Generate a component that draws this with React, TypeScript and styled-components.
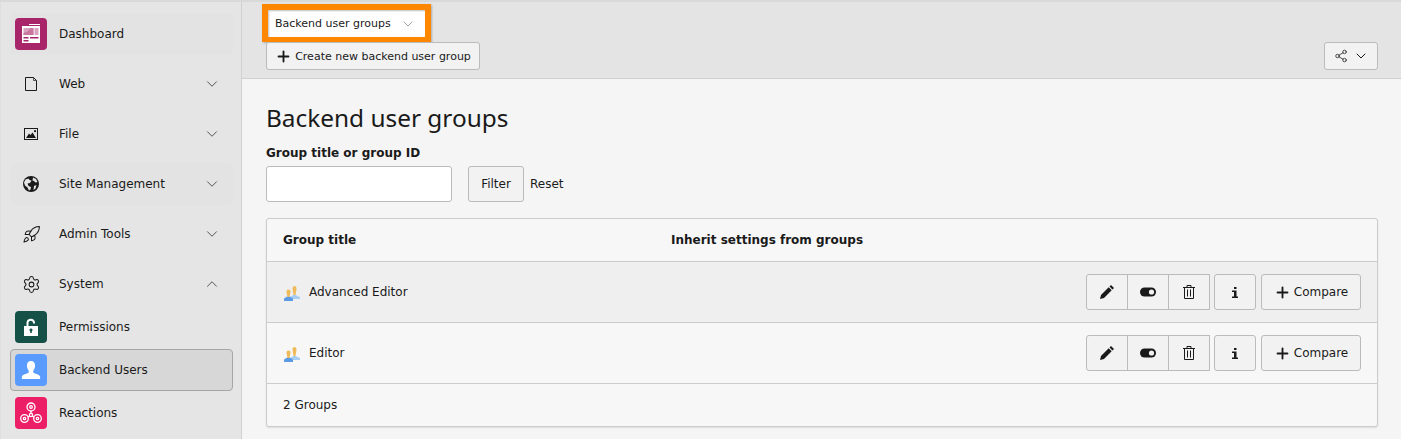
import React from 'react';
import styled, { createGlobalStyle } from 'styled-components';
import { Share2, ChevronDown, ChevronUp, Plus, Settings, Rocket } from 'lucide-react';

const GlobalStyle = createGlobalStyle`
  html, body {
    margin: 0;
    height: 100%;
    overflow: hidden;
    background: #f5f5f5;
    color: #1a1a1a;
    font-family: "DejaVu Sans", Verdana, sans-serif;
    font-size: 12px;
  }
`;

const Page = styled.div`
  display: flex;
  width: 1401px;
  height: 439px;
  overflow: hidden;
  border-top: 2px solid #d9d9d9;
  box-sizing: border-box;
`;

const Sidebar = styled.nav`
  box-sizing: border-box;
  flex: 0 0 242px;
  padding: 11px 8px 0 10px;
  background: #e5e5e5;
  border-left: 1px solid #dcdfe2;
  border-right: 1px solid #d0d0d0;
`;

const NavRow = styled.div<{ $hover?: boolean }>`
  display: flex;
  align-items: center;
  box-sizing: border-box;
  height: 42px;
  margin: 8px 0 0 -1px;
  padding: 0 12px 0 5px;
  border-radius: 4px;
  background: ${props => (props.$hover ? '#e3e3e3' : 'transparent')};

  &:first-child {
    margin-top: 0;
  }
`;

const NavIconSlot = styled.span`
  display: flex;
  align-items: center;
  justify-content: center;
  width: 32px;
  height: 32px;
  margin-right: 12px;
  color: #1a1a1a;
`;

const NavLabel = styled.span`
  flex: 1;
  font-size: 12px;
  color: #1a1a1a;
`;

const SubRow = styled.div<{ $active?: boolean }>`
  display: flex;
  align-items: center;
  box-sizing: border-box;
  height: 42px;
  margin: 1px 0 0 -1px;
  padding: 0 4px;
  border-radius: 4px;
  border: 1px solid ${props => (props.$active ? '#a6a6a6' : 'transparent')};
  background: ${props => (props.$active ? '#d7d7d7' : 'transparent')};
`;

const ModuleIcon = styled.span<{ $color: string }>`
  display: flex;
  align-items: center;
  justify-content: center;
  width: 32px;
  height: 32px;
  margin-right: 12px;
  border-radius: 4px;
  background: ${props => props.$color};
`;

const Main = styled.main`
  flex: 1;
  min-width: 0;
  display: flex;
  flex-direction: column;
`;

const DocHeader = styled.header`
  box-sizing: border-box;
  height: 77px;
  padding: 2px 23px 0 24px;
  background: #e4e4e4;
  border-bottom: 1px solid #d0d0d0;
`;

const MenuSelect = styled.div`
  display: flex;
  align-items: center;
  justify-content: space-between;
  box-sizing: border-box;
  width: 169px;
  height: 38px;
  margin-left: -4px;
  padding: 0 9px 0 7px;
  background: #fff;
  font-size: 11px;
  border: 6px solid #ff8700;
  border-bottom-width: 5px;
  box-shadow: inset 1px 1px 2px rgba(0, 0, 0, 0.25), 1px 1px 2px rgba(0, 0, 0, 0.25);
`;

const DocButtons = styled.div`
  display: flex;
  justify-content: space-between;
`;

const Button = styled.button`
  display: inline-flex;
  align-items: center;
  justify-content: center;
  box-sizing: border-box;
  padding: 0;
  background: #f2f2f2;
  border: 1px solid #bbb;
  border-radius: 3px;
  color: #1a1a1a;
  font-family: inherit;
  font-size: 11px;
`;

const CreateButton = styled(Button)`
  width: 214px;
  height: 28px;
  gap: 3px;
`;

const ShareButton = styled(Button)`
  width: 54px;
  height: 28px;
  gap: 5px;
`;

const Content = styled.section`
  flex: 1;
  padding: 21px 23px 0 24px;
  background: #f5f5f5;
`;

const Title = styled.h1`
  margin: 0 0 10px;
  font-family: "Noto Sans", sans-serif;
  font-size: 24.4px;
  font-weight: 400;
  line-height: 36px;
  color: #1a1a1a;
`;

const FieldLabel = styled.label`
  display: block;
  margin-bottom: 6px;
  font-size: 12px;
  font-weight: 700;
  line-height: 14px;
`;

const FilterRow = styled.div`
  display: flex;
  align-items: center;
  margin-bottom: 16px;
`;

const TextInput = styled.input`
  box-sizing: border-box;
  width: 186px;
  height: 36px;
  margin-right: 16px;
  background: #fff;
  border: 1px solid #bbb;
  border-radius: 3px;
`;

const FilterButton = styled(Button)`
  width: 56px;
  height: 36px;
  font-size: 12px;
`;

const ResetLink = styled.span`
  margin-left: 6px;
  font-size: 12px;
`;

const Panel = styled.div`
  box-sizing: border-box;
  width: 1112px;
  background: #f7f7f7;
  border: 1px solid #ccc;
  border-radius: 3px;
  box-shadow: 0 1px 2px rgba(0, 0, 0, 0.1);
`;

const HeadRow = styled.div`
  display: flex;
  align-items: center;
  height: 42px;
  padding: 0 16px;
  font-weight: 700;
  border-bottom: 1px solid #ccc;
`;

const TitleCell = styled.span`
  width: 388px;
`;

const GroupRow = styled.div<{ $hover?: boolean }>`
  display: flex;
  align-items: center;
  height: 60px;
  padding: 0 16px;
  background: ${props => (props.$hover ? '#efefef' : 'transparent')};
  border-bottom: 1px solid #ccc;
`;

const GroupIconSlot = styled.span`
  display: flex;
  margin-left: 1px;
  margin-top: 1px;
`;

const GroupName = styled.span`
  flex: 1;
  margin-left: 9px;
`;

const ButtonGroup = styled.div`
  display: flex;
  margin-right: 4px;
`;

const GroupButton = styled(Button)`
  width: 42px;
  height: 36px;
  border-radius: 0;
  margin-left: -1px;

  &:first-child {
    margin-left: 0;
    border-radius: 3px 0 0 3px;
  }
`;

const InfoButton = styled(Button)`
  width: 42px;
  height: 36px;
  margin-right: 5px;
`;

const CompareButton = styled(Button)`
  width: 100px;
  height: 36px;
  gap: 3px;
  font-size: 12px;
`;

const FootRow = styled.div`
  display: flex;
  align-items: center;
  height: 42px;
  padding: 0 16px;
`;

const FileIcon = () => (
  <svg width="16" height="16" viewBox="0 0 16 16" fill="none" stroke="#1a1a1a">
    <path d="M2.500 1.500h8l3 3v10h-11z" />
    <path d="M10.500 1.500v3h3" strokeWidth="0.7" />
  </svg>
);

const ImageIcon = () => (
  <svg width="16" height="16" viewBox="0 0 16 16" fill="#1a1a1a">
    <path d="M1 2h14v12H1zm1 1v10h12V3z" fillRule="evenodd" />
    <path d="M3 12l3-4.500 1.500 1.500 2-2.500 3.500 5.500z" />
    <circle cx="12" cy="5.200" r="1.100" />
  </svg>
);

const GlobeIcon = () => (
  <svg width="18" height="18" viewBox="0 0 18 18">
    <circle cx="9" cy="9" r="8" fill="#1a1a1a" />
    <path d="M3.500 4.500l3-1 1 1.500 2 .5-1.500 2.500-2.500.5 1 2.500 2.500 1-.5 2.500-1.500 1-1.500-3-2.500-2-1-3zM11 2.500l3 1.500 1.500 3-2 .5-1.500-1.500-1.500-.5zM12 11l2.500-1-1 3.500-2 1.500z" fill="#e5e5e5" />
  </svg>
);

const DashboardIcon = () => (
  <svg width="20" height="20" viewBox="0 0 20 20">
    <path d="M1 2h18v17H1z" fill="#fff" />
    <path d="M8 0h11v1H8z" fill="#fff" />
    <path d="M2.500 4h10v7h-10z" fill="#d9a3bf" />
    <path d="M2.500 9l4-1.500 3-3.500h3v7h-10z" fill="#c9779f" />
    <path d="M13.500 4h4v7h-4z" fill="#d9a3bf" />
    <path d="M2.500 13h5v1.500h-5zM2.500 16h5v1.500h-5zM9 13h8.500v1.500H9z" fill="#a72568" />
  </svg>
);

const LockIcon = () => (
  <svg width="16" height="18" viewBox="0 0 16 18" fill="#fff">
    <path d="M1 8h14v10H1zM8 10.500a1.500 1.500 0 0 0-.8 2.800V15h1.600v-1.700A1.500 1.500 0 0 0 8 10.500z" fillRule="evenodd" />
    <path d="M3.500 8V4.500a4.300 4.300 0 0 1 8.500 0V5.500h-2v-1a2.300 2.300 0 0 0-4.500 0V8z" />
  </svg>
);

const UserIcon = () => (
  <svg width="20" height="20" viewBox="0 0 22 22" fill="#fff">
    <path d="M11 1c3 0 4.500 2.200 4.500 5 0 2.600-1 4.600-2 5.700v2c1 1.200 6.500 2 7.500 4.300V21H1v-3c1-2.300 6.500-3.100 7.500-4.300v-2c-1-1.100-2-3.100-2-5.700C6.500 3.200 8 1 11 1z" />
  </svg>
);

const ReactionsIcon = () => (
  <svg width="22" height="22" viewBox="0 0 22 22" fill="none" stroke="#fff" strokeWidth="1.300">
    <circle cx="11" cy="5" r="4" />
    <circle cx="11" cy="5" r="1.300" />
    <circle cx="4.500" cy="16.500" r="3.800" />
    <circle cx="4.500" cy="16.500" r="1.200" />
    <circle cx="17.500" cy="16.500" r="3.800" />
    <circle cx="17.500" cy="16.500" r="1.200" />
    <circle cx="11" cy="13" r="1.600" />
    <path d="M11 9v2.400M8 15.200l1.600-1.200M14 15.200L12.400 14" />
  </svg>
);

const GroupIcon = () => (
  <svg width="16" height="16" viewBox="0 0 16 16">
    <path d="M6 14v-1.500c0-1.300 2.500-1.500 3-2.500h3c.5 1 4 1.200 4 2.500V14z" fill="#a8cdf2" />
    <path d="M8.500 3.500C8.500 2 9.300 1 10.500 1s2 1 2 2.500S11.800 8 11.500 10h-2C9.300 8 8.500 5 8.500 3.500z" fill="#f0b95a" />
    <path d="M0 16v-2c0-1.200 2-1.500 3-2.500h3c1 1 3 1.300 3 2.500v2z" fill="#5b9be6" />
    <path d="M2.500 6.500C2.500 5.200 3.300 4.500 4.500 4.500s2 .7 2 2-.8 3.500-1 5.500h-2c-.2-2-1-4.200-1-5.500z" fill="#f0b95a" />
  </svg>
);

const PencilIcon = () => (
  <svg width="16" height="16" viewBox="0 0 16 16" fill="#1a1a1a">
    <path d="M12 1l3 3-1.500 1.500-3-3zM9.700 3.300l3 3L5 14l-4 1 1-4z" />
  </svg>
);

const ToggleIcon = () => (
  <svg width="16" height="16" viewBox="0 0 16 16">
    <rect x="0" y="3.500" width="16" height="9" rx="4.500" fill="#1a1a1a" />
    <circle cx="11.500" cy="8" r="2.600" fill="#f2f2f2" />
  </svg>
);

const TrashIcon = () => (
  <svg width="16" height="16" viewBox="0 0 16 16" fill="none" stroke="#1a1a1a">
    <path d="M2 3.500h12M6 3.500v-2h4v2M3.500 3.500v11h9v-11M6.500 5.500v7M9.500 5.500v7" />
  </svg>
);

const InfoIcon = () => (
  <svg width="16" height="16" viewBox="0 0 16 16" fill="#1a1a1a">
    <path d="M7 3h2.500v2H7zM5 6.500h4.500v6H11V14H5v-1.500h2V8H5z" />
  </svg>
);

const navItems = [
  { label: 'Web', icon: <FileIcon /> },
  { label: 'File', icon: <ImageIcon /> },
  { label: 'Site Management', icon: <GlobeIcon />, hover: true },
  { label: 'Admin Tools', icon: <Rocket size={19} strokeWidth={1.3} /> },
];

const groups = [
  { name: 'Advanced Editor', hover: true },
  { name: 'Editor' },
];

const App = () => (
  <Page>
    <GlobalStyle />
    <Sidebar>
      <NavRow $hover>
        <ModuleIcon $color="#a72568"><DashboardIcon /></ModuleIcon>
        <NavLabel>Dashboard</NavLabel>
      </NavRow>
      {navItems.map(item => (
        <NavRow key={item.label} $hover={item.hover}>
          <NavIconSlot>{item.icon}</NavIconSlot>
          <NavLabel>{item.label}</NavLabel>
          <ChevronDown size={18} strokeWidth={1.2} color="#444" />
        </NavRow>
      ))}
      <NavRow>
        <NavIconSlot><Settings size={19} strokeWidth={1.3} /></NavIconSlot>
        <NavLabel>System</NavLabel>
        <ChevronUp size={18} strokeWidth={1.2} color="#444" />
      </NavRow>
      <SubRow>
        <ModuleIcon $color="#155146"><LockIcon /></ModuleIcon>
        <NavLabel>Permissions</NavLabel>
      </SubRow>
      <SubRow $active>
        <ModuleIcon $color="#5a9bff"><UserIcon /></ModuleIcon>
        <NavLabel>Backend Users</NavLabel>
      </SubRow>
      <SubRow>
        <ModuleIcon $color="#ec1f66"><ReactionsIcon /></ModuleIcon>
        <NavLabel>Reactions</NavLabel>
      </SubRow>
    </Sidebar>
    <Main>
      <DocHeader>
        <MenuSelect>
          Backend user groups
          <ChevronDown size={16} strokeWidth={1} color="#777" />
        </MenuSelect>
        <DocButtons>
          <CreateButton><Plus size={17} strokeWidth={2.6} />Create new backend user group</CreateButton>
          <ShareButton>
            <Share2 size={14} strokeWidth={1.3} />
            <ChevronDown size={16} strokeWidth={1.5} />
          </ShareButton>
        </DocButtons>
      </DocHeader>
      <Content>
        <Title>Backend user groups</Title>
        <FieldLabel>Group title or group ID</FieldLabel>
        <FilterRow>
          <TextInput />
          <FilterButton>Filter</FilterButton>
          <ResetLink>Reset</ResetLink>
        </FilterRow>
        <Panel>
          <HeadRow>
            <TitleCell>Group title</TitleCell>
            <span>Inherit settings from groups</span>
          </HeadRow>
          {groups.map(group => (
            <GroupRow key={group.name} $hover={group.hover}>
              <GroupIconSlot><GroupIcon /></GroupIconSlot>
              <GroupName>{group.name}</GroupName>
              <ButtonGroup>
                <GroupButton><PencilIcon /></GroupButton>
                <GroupButton><ToggleIcon /></GroupButton>
                <GroupButton><TrashIcon /></GroupButton>
              </ButtonGroup>
              <InfoButton><InfoIcon /></InfoButton>
              <CompareButton><Plus size={17} strokeWidth={2.6} />Compare</CompareButton>
            </GroupRow>
          ))}
          <FootRow>2 Groups</FootRow>
        </Panel>
      </Content>
    </Main>
  </Page>
);

export default App;
